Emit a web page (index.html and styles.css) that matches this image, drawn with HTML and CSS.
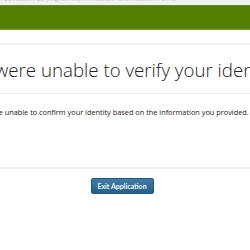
FILE: index.html
```html
<!DOCTYPE html>
<html>
<head>
<meta charset="utf-8">
<link rel="stylesheet" href="styles.css">
</head>
<body>
<div class="page">
  <div class="topstrip"><span class="crumb">Application Applying/IdentityVerification/FailureOutcome Send</span></div>
  <div class="greenbar"></div>
  <div class="rule rule-top"></div>
  <div class="content">
    <div class="inner">
      <h1 class="title">We were unable to verify your identity</h1>
      <div class="rule rule-title"></div>
      <p class="message">We were unable to confirm your identity based on the information you provided.</p>
    </div>
  </div>
  <div class="rule rule-bottom"></div>
  <div class="actions">
    <button class="btn">Exit Application</button>
  </div>
</div>
</body>
</html>
```
FILE: styles.css
```css
html, body {
  margin: 0;
  padding: 0;
  background: #ffffff;
  overflow: hidden;
}
.page {
  width: 250px;
  font-family: "Open Sans", "Liberation Sans", sans-serif;
}
.topstrip {
  height: 5px;
  background: #f1f2f4;
  overflow: hidden;
  display: flex;
  align-items: flex-end;
}
.crumb {
  font-size: 6px;
  line-height: 6px;
  color: #c4c4c4;
  white-space: nowrap;
  margin-bottom: 3px;
  padding-left: 1px;
}
.greenbar {
  height: 23px;
  background: #527f00;
  border-top: 1px solid #5f8a12;
  border-bottom: 1px solid #7aa033;
}
.rule {
  height: 1px;
  background: #ececec;
}
.rule-top {
  margin-top: 13px;
  height: 2px;
  background: #f1f1f1;
}
.content {
  display: flex;
  justify-content: center;
}
.inner {
  flex: none;
  width: 324px;
}
.title {
  margin: 12px 0 0 0;
  font-weight: 300;
  font-size: 18.7px;
  line-height: 25px;
  color: #222;
  white-space: nowrap;
}
.rule-title {
  margin-top: 11px;
  background: #ededed;
}
.message {
  margin: 13px 0 0 10px;
  font-size: 7.35px;
  line-height: 11px;
  color: #222;
  white-space: nowrap;
}
.rule-bottom {
  margin-top: 49px;
  height: 2px;
  background: #f1f1f1;
}
.actions {
  display: flex;
  justify-content: center;
  padding-top: 9px;
  padding-right: 6px;
}
.btn {
  font-family: "Lato", "Liberation Sans", sans-serif;
  font-weight: 700;
  font-size: 7px;
  color: #f4f8fb;
  background: linear-gradient(#3f7ca7, #26608a);
  border: 1px solid #22557a;
  border-radius: 2px;
  width: 63px;
  height: 16px;
  padding: 0;
  white-space: nowrap;
}
```
